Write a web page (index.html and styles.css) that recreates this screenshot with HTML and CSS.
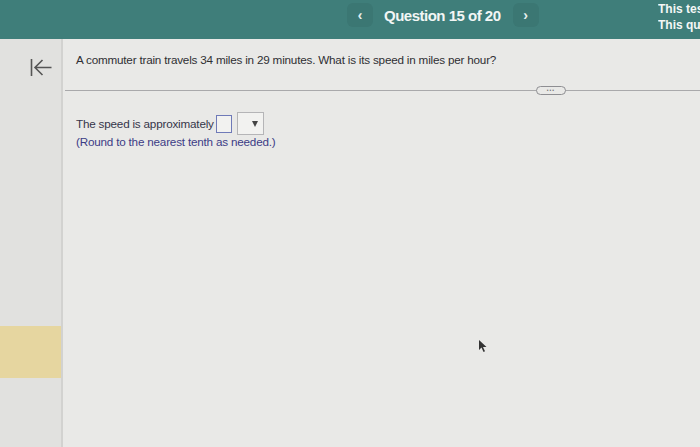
FILE: index.html
```html
<!DOCTYPE html>
<html>
<head>
<meta charset="utf-8">
<link rel="stylesheet" href="styles.css">
</head>
<body>
<div class="page">
  <header class="topbar">
    <div class="nav">
      <span class="navbtn">&#8249;</span>
      <span class="title">Question 15 of 20</span>
      <span class="navbtn">&#8250;</span>
    </div>
    <div class="info">
      <div>This test</div>
      <div>This question</div>
    </div>
  </header>
  <div class="body">
    <aside class="sidebar">
      <svg class="back" width="22" height="19" viewBox="0 0 22 19">
        <path d="M1.5 1 V18" stroke="#555" stroke-width="1.6" fill="none"/>
        <path d="M12.5 2 L5 9.5 L12.5 17 M5 9.5 H21.5" stroke="#555" stroke-width="1.6" fill="none"/>
      </svg>
      <div class="mark"></div>
    </aside>
    <main class="main">
      <p class="question">A commuter train travels 34 miles in 29 minutes. What is its speed in miles per hour?</p>
      <div class="rule">
        <span class="pill">&#8226;&#8226;&#8226;</span>
      </div>
      <div class="answer">
        <div class="line">The speed is approximately<span class="box"></span><span class="select"><span class="tri"></span></span></div>
        <div class="hint">(Round to the nearest tenth as needed.)</div>
      </div>
    </main>
  </div>
  <svg class="cursor" width="10" height="14" viewBox="0 0 10 14">
    <path d="M1 1 L1 11 L3.5 8.5 L5.5 13 L7 12.3 L5 8 L8.5 8 Z" fill="#333"/>
  </svg>
</div>
</body>
</html>
```

FILE: styles.css
```css
html, body {
  margin: 0;
  padding: 0;
}
body {
  width: 700px;
  height: 447px;
  overflow: hidden;
  font-family: "Liberation Sans", Arial, sans-serif;
  background: #e9e9e7;
}
.page {
  position: relative;
  width: 700px;
  height: 447px;
  display: flex;
  flex-direction: column;
}
.topbar {
  height: 39px;
  flex: none;
  background: #3f7e7a;
  display: flex;
  align-items: center;
  position: relative;
}
.nav {
  display: flex;
  align-items: center;
  margin-left: 347px;
  height: 26px;
  margin-top: -9px;
}
.navbtn {
  width: 26px;
  height: 24px;
  border-radius: 6px;
  background: #3b7773;
  color: #e6efee;
  font-size: 14px;
  font-weight: bold;
  display: flex;
  align-items: center;
  justify-content: center;
}
.title {
  color: #f2f6f5;
  font-weight: bold;
  font-size: 15px;
  letter-spacing: -0.5px;
  margin: 0 12px 0 11px;
}
.info {
  position: absolute;
  left: 658px;
  top: 1px;
  width: 42px;
  overflow: hidden;
  color: #f4f7f6;
  font-weight: bold;
  font-size: 12px;
  line-height: 16px;
  white-space: nowrap;
}
.body {
  flex: 1;
  display: flex;
}
.sidebar {
  width: 61px;
  flex: none;
  background: #e1e1df;
  border-right: 2px solid #d2d2d0;
  display: flex;
  flex-direction: column;
}
.back {
  margin: 19px 0 0 30px;
}
.mark {
  margin-top: 249px;
  height: 52px;
  background: #e6d6a0;
}
.main {
  flex: 1;
  padding-left: 13px;
}
.question {
  margin: 14px 0 0 0;
  font-size: 11.7px;
  color: #2f2f33;
  letter-spacing: -0.2px;
}
.rule {
  margin-top: 24px;
  height: 1px;
  background: #a9a9ab;
  position: relative;
  margin-left: -11px;
}
.pill {
  position: absolute;
  left: 471px;
  top: -4px;
  width: 28px;
  height: 7px;
  border: 1px solid #8e8e92;
  border-radius: 5px;
  background: #e9e9e7;
  font-size: 5px;
  line-height: 7px;
  text-align: center;
  color: #777;
  letter-spacing: 1px;
}
.answer {
  margin-top: 21px;
  font-size: 11.7px;
  letter-spacing: -0.2px;
}
.line {
  display: flex;
  align-items: center;
  color: #36364a;
}
.box {
  width: 14px;
  height: 16px;
  border: 1.5px solid #6f7ab8;
  margin-left: 2px;
  background: #f2f2f0;
}
.select {
  width: 27px;
  height: 23px;
  border: 1px solid #b5b5b7;
  margin-left: 5px;
  background: #f2f2f0;
  display: flex;
  justify-content: flex-end;
  align-items: center;
  padding-right: 5px;
  box-sizing: border-box;
}
.tri {
  width: 0;
  height: 0;
  border-left: 3.5px solid transparent;
  border-right: 3.5px solid transparent;
  border-top: 6px solid #444;
}
.hint {
  color: #3c3c86;
  margin-top: 0;
}
.cursor {
  position: absolute;
  left: 478px;
  top: 339px;
}
```
